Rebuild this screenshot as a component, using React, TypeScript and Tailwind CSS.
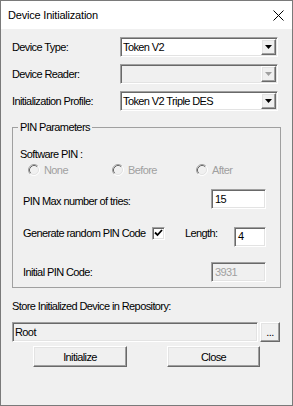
import { useState } from 'react';

const sunken =
  'border border-t-[#a0a0a0] border-l-[#a0a0a0] border-r-white border-b-white shadow-[inset_1px_1px_0_#696969,inset_-1px_-1px_0_#e3e3e3]';
const raised =
  'border border-t-white border-l-white border-r-[#696969] border-b-[#696969] shadow-[inset_-1px_-1px_0_#a0a0a0,inset_1px_1px_0_#e3e3e3]';

function Combo({ value, disabled }: { value?: string; disabled?: boolean }) {
  return (
    <div className={`w-[158px] h-[20px] flex items-stretch ${sunken} ${disabled ? 'bg-[#f0f0f0]' : 'bg-white'}`}>
      <span className="flex-1 pl-[2px] flex items-center leading-none">{value}</span>
      <span className={`w-[15px] m-[1px] flex items-center justify-center bg-[#f0f0f0] ${raised}`}>
        <svg width="7" height="4" viewBox="0 0 7 4">
          <polygon points="0,0 7,0 3.5,4" fill={disabled ? '#a0a0a0' : '#000'} />
        </svg>
      </span>
    </div>
  );
}

function Radio({ label }: { label: string }) {
  return (
    <div className="w-[84px] flex items-center gap-[4px] text-[#a0a0a0]">
      <svg width="12" height="12" viewBox="0 0 12 12">
        <circle cx="6" cy="6" r="5" fill="#f0f0f0" />
        <path d="M2.11 9.89 A5.5 5.5 0 0 1 9.89 2.11" fill="none" stroke="#a0a0a0" />
        <path d="M9.89 2.11 A5.5 5.5 0 0 1 2.11 9.89" fill="none" stroke="#fff" />
        <path d="M2.82 9.18 A4.5 4.5 0 0 1 9.18 2.82" fill="none" stroke="#696969" />
        <path d="M9.18 2.82 A4.5 4.5 0 0 1 2.82 9.18" fill="none" stroke="#e3e3e3" />
      </svg>
      <span>{label}</span>
    </div>
  );
}

function Field({ value, className, disabled }: { value: string; className: string; disabled?: boolean }) {
  return (
    <div
      className={`h-[20px] pl-[3px] flex items-center leading-none ${sunken} ${className} ${
        disabled ? 'bg-[#f0f0f0] text-[#a0a0a0]' : 'bg-white'
      }`}
    >
      {value}
    </div>
  );
}

export default function App() {
  const [generate, setGenerate] = useState(true);

  return (
    <div className="w-[293px] h-[406px] bg-[#f0f0f0] border border-[#7a7a7a] text-black text-[11px] leading-[14px] tracking-[-0.6px] font-['Liberation_Sans',Arial,sans-serif] select-none">
      {/* title bar */}
      <div className="h-[28px] bg-white flex items-center justify-between pl-[7px] pr-[8px]">
        <span className="tracking-[-0.2px] text-[11px]">Device Initialization</span>
        <svg width="11" height="11" viewBox="0 0 11 11">
          <path d="M0.5 0.5 L10.5 10.5 M10.5 0.5 L0.5 10.5" stroke="#000" strokeWidth="1" />
        </svg>
      </div>

      <div className="px-[11px] pt-[8px] flex flex-col">
        <div className="flex items-center">
          <span className="w-[108px]">Device Type:</span>
          <Combo value="Token V2" />
        </div>
        <div className="flex items-center mt-[7px]">
          <span className="w-[108px]">Device Reader:</span>
          <Combo disabled />
        </div>
        <div className="flex items-center mt-[7px]">
          <span className="w-[108px]">Initialization Profile:</span>
          <Combo value="Token V2 Triple DES" />
        </div>

        <fieldset className="mt-[9px] w-[269px] border border-[#a0a0a0] pb-[5px]">
          <legend className="ml-[5px] px-[2px] leading-[14px]">PIN Parameters</legend>
          <div className="mt-[13px] pl-[7px]">Software PIN :</div>
          <div className="mt-[2px] pl-[15px] flex">
            <Radio label="None" />
            <Radio label="Before" />
            <Radio label="After" />
          </div>

          <div className="mt-[12px] pl-[10px] flex items-center">
            <span className="w-[188px] mt-[3px]">PIN Max number of tries:</span>
            <Field value="15" className="w-[55px]" />
          </div>

          <div className="mt-[17px] pl-[10px] flex items-center">
            <div className="flex items-center mb-[7px]">
              <span className="w-[129px]">Generate random PIN Code</span>
              <button
                onClick={() => setGenerate(!generate)}
                className={`w-[13px] h-[13px] bg-white flex items-center justify-center ${sunken}`}
              >
                {generate && (
                  <svg width="9" height="8" viewBox="0 0 9 8">
                    <path d="M1 3.5 L3.5 6 L8 1" fill="none" stroke="#000" strokeWidth="1.8" />
                  </svg>
                )}
              </button>
              <span className="ml-[20px] w-[49px]">Length:</span>
            </div>
            <Field value="4" className="w-[32px]" />
          </div>

          <div className="mt-[15px] pl-[10px] flex items-center">
            <span className="w-[188px]">Initial PIN Code:</span>
            <Field value="3931" className="w-[55px]" disabled />
          </div>
        </fieldset>

        <div className="mt-[11px]">Store Initialized Device in Repository:</div>

        <div className="mt-[9px] flex gap-[2px]">
          <div className={`w-[246px] h-[20px] pl-[2px] flex items-center bg-[#f0f0f0] ${sunken}`}>Root</div>
          <button className={`w-[20px] h-[20px] bg-[#f0f0f0] flex items-end justify-center pb-[3px] leading-none ${raised}`}>
            ...
          </button>
        </div>

        <div className="mt-[4px] pl-[21px] flex gap-[40px]">
          <button className={`w-[94px] h-[21px] bg-[#f0f0f0] ${raised}`}>Initialize</button>
          <button className={`w-[93px] h-[21px] bg-[#f0f0f0] ${raised}`}>Close</button>
        </div>
      </div>
    </div>
  );
}
